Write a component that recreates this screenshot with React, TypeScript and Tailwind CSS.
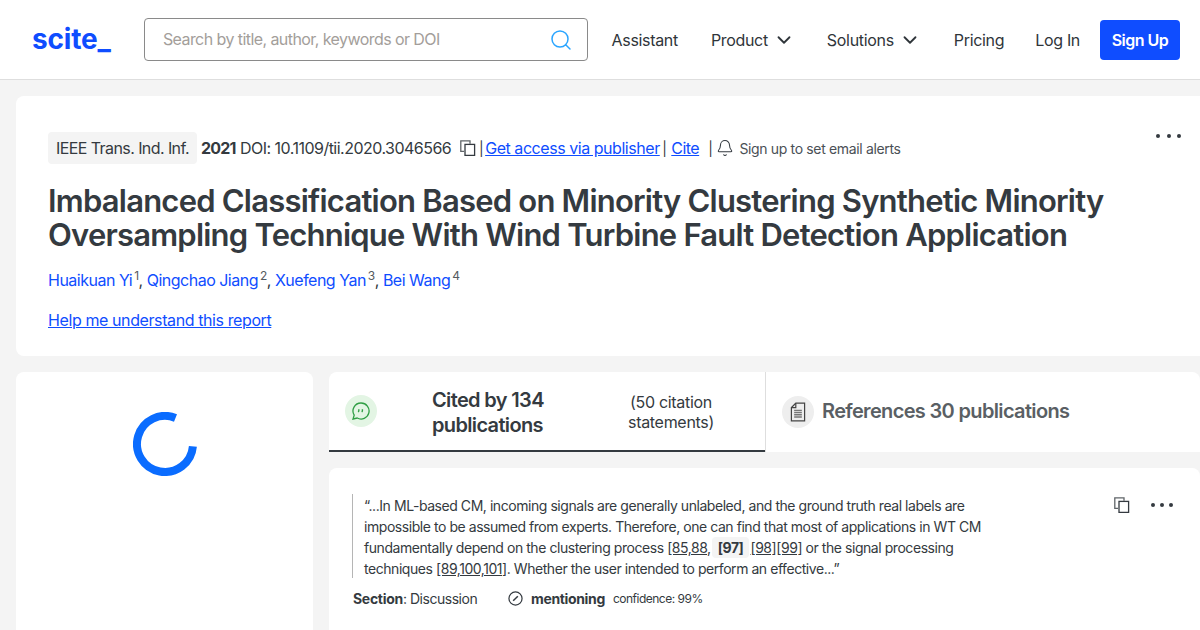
import { Bell, ChevronDown, Search } from "lucide-react";

const navLink = "text-[16px] tracking-[-0.32px] text-[#2f353a] whitespace-nowrap";

function Dots({ className }: { className?: string }) {
  return (
    <div className={`flex ${className ?? ""}`}>
      <span className="size-[4px] rounded-full bg-[#343a40]" />
      <span className="size-[4px] rounded-full bg-[#343a40]" />
      <span className="size-[4px] rounded-full bg-[#343a40]" />
    </div>
  );
}

function CopyIcon({ className }: { className?: string }) {
  return (
    <svg viewBox="0 0 16 16" fill="none" stroke="#343a40" strokeWidth="1.3" className={className}>
      <path d="M4 11.400H0.800V0.800H10v3" stroke="#5f6468" />
      <rect x="5" y="4.400" width="9.600" height="11" />
    </svg>
  );
}

function Header() {
  return (
    <header className="flex h-[80px] shrink-0 items-center border-b border-[#dedede] bg-white pl-[32px] pr-[20px]">
      <div className="w-[112px] pb-[2px] text-[28px] leading-none font-bold tracking-[-0.2px] text-[#0f4dff]">scite_</div>
      <div className="flex h-[43px] w-[444px] items-center justify-between rounded-[4px] border border-[#8a8a8a] pl-[18px] pr-[14px]">
        <span className="pb-[2px] text-[16px] tracking-[-0.57px] text-[#a39e9a]">Search by title, author, keywords or DOI</span>
        <Search className="size-[24px] text-[#2aa5ff]" strokeWidth={1.5} />
      </div>
      <nav className="ml-[24px] flex flex-1 items-center gap-[32px]">
        <span className={`${navLink} mr-[1px]`}>Assistant</span>
        <span className={`${navLink} flex items-center gap-[5px]`}>
          Product <ChevronDown className="size-[22px]" strokeWidth={2} />
        </span>
        <span className={`${navLink} flex items-center gap-[5px]`}>
          Solutions <ChevronDown className="size-[22px]" strokeWidth={2} />
        </span>
        <span className={`${navLink} ml-[1px]`}>Pricing</span>
        <span className={`${navLink} -ml-[1px]`}>Log In</span>
        <button className="-ml-[12px] h-[40px] w-[80px] rounded-[4px] bg-[#0f4dff] text-[16px] font-semibold tracking-[-0.5px] text-white">
          Sign Up
        </button>
      </nav>
    </header>
  );
}

function Authors() {
  const authors = ["Huaikuan Yi", "Qingchao Jiang", "Xuefeng Yan", "Bei Wang"];
  return (
    <p className="mt-[16px] text-[16px] leading-[24px] tracking-[-0.5px] text-[#2f353a]">
      {authors.map((name, i) => (
        <span key={name}>
          <span className="text-[#0f4dff]">{name}</span>
          <sup className="ml-[2px] text-[12px] text-[#555b60]">{i + 1}</sup>
          {i < authors.length - 1 ? ", " : ""}
        </span>
      ))}
    </p>
  );
}

function Summary() {
  return (
    <section className="relative -mr-[20px] h-[260px] rounded-lg bg-white pl-[32px] pt-[36px]">
      <div className="flex h-[32px] items-center text-[16px] tracking-[-0.52px] whitespace-nowrap text-[#343a40]">
        <span className="flex h-[32px] w-[149px] items-center rounded-[4px] bg-[#f4f4f4] pl-[8px] tracking-[-0.58px]">IEEE Trans. Ind. Inf.</span>
        <b className="ml-[4px] w-[35px] font-bold tracking-[-0.8px]">2021</b>
        <span className="ml-[4px] w-[212px]">DOI: 10.1109/tii.2020.3046566</span>
        <CopyIcon className="ml-[8px] size-[16px]" />
        <span className="ml-[3px] text-[14px]">|</span>
        <a className="ml-[2px] w-[174px] tracking-[-0.45px] text-[#0f4dff] underline">Get access via publisher</a>
        <span className="ml-[3px] text-[14px]">|</span>
        <a className="ml-[5px] w-[28px] text-[#0f4dff] underline">Cite</a>
        <span className="ml-[9px] text-[14px]">|</span>
        <Bell className="ml-[4px] size-[18px]" strokeWidth={1.4} />
        <span className="ml-[5px] text-[14px] tracking-[-0.35px] text-[#4a5056]">Sign up to set email alerts</span>
      </div>
      <Dots className="absolute right-[39px] top-[38px] gap-[6.500px]" />
      <h1 className="mt-[20px] text-[31px] leading-[34px] font-semibold tracking-[-0.78px] text-[#343a40]">
        Imbalanced Classification Based on Minority Clustering Synthetic Minority Oversampling Technique With Wind
        Turbine Fault Detection Application
      </h1>
      <Authors />
      <a className="mt-[16px] block text-[16px] leading-[24px] tracking-[-0.4px] text-[#0f4dff] underline">Help me understand this report</a>
    </section>
  );
}

function Spinner() {
  return (
    <svg viewBox="0 0 64 64" className="size-[64px]" fill="none">
      <path d="M42.500 6A28 28 0 1 0 59.900 34.400" stroke="#0a6cff" strokeWidth="8" />
    </svg>
  );
}

function Tabs() {
  return (
    <div className="flex h-[80px] rounded-t-lg bg-white">
      <div className="flex w-[436px] items-center border-b-[2px] border-[#343a40] pl-[16px]">
        <span className="flex size-[32px] items-center justify-center rounded-full bg-[#e3f5e4]">
          <svg viewBox="0 0 20 20" fill="none" stroke="#2f9e44" strokeWidth="1.300" className="size-[20px]">
            <path d="M10 2a8 8 0 1 1-3.800 15L2 18l1.200-3.800A8 8 0 0 1 10 2Z" />
            <path d="M7.800 8.200v1.600q0 .8-.7 1.200M11.400 8.200v1.600q0 .8-.7 1.200" strokeWidth="1.400" />
          </svg>
        </span>
        <div className="ml-[55px] w-[140px] pt-[3px] text-[20px] leading-[25px] font-semibold tracking-[-0.65px] text-[#343a40]">
          Cited by 134 publications
        </div>
        <div className="ml-[39px] w-[120px] pt-[2px] text-center text-[16px] leading-[20px] tracking-[-0.3px] text-[#343a40]">
          (50 citation statements)
        </div>
      </div>
      <div className="flex flex-1 items-center border-l border-[#dedede] pl-[16px]">
        <span className="flex size-[32px] items-center justify-center rounded-full bg-[#eeeeee]">
          <svg viewBox="0 0 20 20" fill="none" stroke="#444" strokeWidth="1.100" className="size-[22px]">
            <path d="M8 2h8v16H4V6z" />
            <path d="M8 2v4H4" />
            <path d="M6.500 8.500h7M6.500 10.500h7M6.500 12.500h7M6.500 14.500h7" stroke="#777" strokeWidth="1.300" />
          </svg>
        </span>
        <span className="ml-[8px] pb-[2px] text-[20px] font-semibold tracking-[-0.66px] text-[#5a5f64]">References 30 publications</span>
      </div>
    </div>
  );
}

function Ref({ children }: { children: string }) {
  return <span className="underline">{children}</span>;
}

function Statement() {
  return (
    <div className="relative mt-[16px] h-[200px] rounded-t-lg bg-white pl-[23px] pt-[26px]">
      <div className="absolute right-[27px] top-[29px] flex items-center gap-[21px]">
        <CopyIcon className="size-[16px]" />
        <Dots className="gap-[5px]" />
      </div>
      <blockquote className="h-[84px] w-[640px] border-l border-[#b5b5b5] pl-[11px] pt-[1px] text-[14px] leading-[21px] tracking-[-0.445px] whitespace-nowrap text-[#343a40]">
        “...In ML-based CM, incoming signals are generally unlabeled, and the ground truth real labels are
        <br />
        impossible to be assumed from experts. Therefore, one can find that most of applications in WT CM
        <br />
        fundamentally depend on the clustering process <Ref>[85,88,</Ref>
        <b className="mx-[1px] inline-block rounded-[4px] bg-[#f4f4f4] px-[6px]">[97]</b>
        <Ref>[98]</Ref>
        <Ref>[99]</Ref> or the signal processing
        <br />
        techniques <Ref>[89,100,101]</Ref>. Whether the user intended to perform an effective...”
      </blockquote>
      <div className="mt-[9px] flex items-center pl-[1px] pt-[1px] text-[14px] leading-[21px] tracking-[-0.47px] whitespace-nowrap text-[#343a40]">
        <span className="w-[155px]">
          <b className="tracking-[-0.3px]">Section</b>: Discussion
        </span>
        <svg viewBox="0 0 16 16" fill="none" stroke="#343a40" strokeWidth="1.300" className="size-[15px]">
          <circle cx="8" cy="8" r="7" />
          <path d="M5.500 10.500 10.500 5.500" strokeWidth="1.600" />
        </svg>
        <b className="ml-[8px] tracking-[-0.35px]">mentioning</b>
        <span className="ml-[8px] text-[12px] tracking-[-0.5px]">confidence: 99%</span>
      </div>
    </div>
  );
}

export default function App() {
  return (
    <div className="flex h-[630px] w-[1200px] flex-col overflow-hidden bg-[#f4f4f4] font-['Inter','Liberation_Sans',sans-serif]">
      <Header />
      <main className="flex flex-col gap-[16px] pl-[16px] pt-[16px]">
        <Summary />
        <div className="flex gap-[16px]">
          <aside className="flex h-[300px] w-[297px] shrink-0 justify-center rounded-t-lg bg-white pt-[40px]">
            <Spinner />
          </aside>
          <div className="flex-1">
            <Tabs />
            <Statement />
          </div>
        </div>
      </main>
    </div>
  );
}
